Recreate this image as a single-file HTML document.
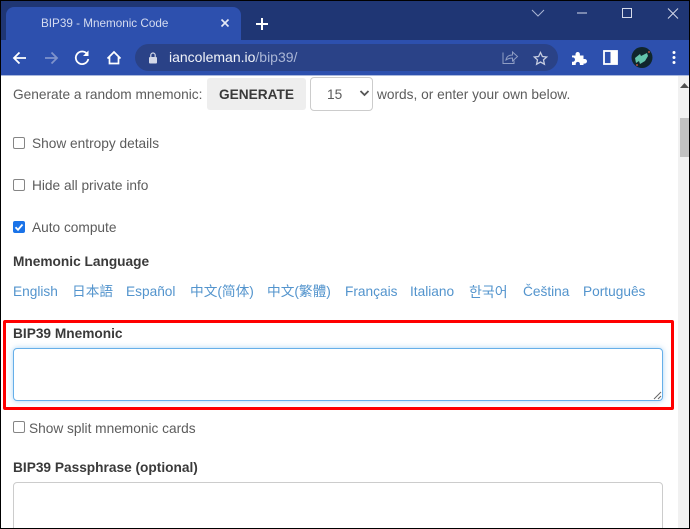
<!DOCTYPE html>
<html><head><meta charset="utf-8">
<style>
html,body{margin:0;padding:0;width:690px;height:529px;overflow:hidden;background:#fff}
body{position:relative;font-family:"Liberation Sans","Noto Sans CJK SC",sans-serif;font-size:13.7px;color:#5c5c5c}
.a{position:absolute;white-space:nowrap}
.t{line-height:22px}
b.a{color:#3a3a3a;font-weight:700;line-height:22px}
.cb{position:absolute;width:10px;height:10px;border:1px solid #858585;border-radius:2px;background:#fff}
.l{position:absolute;top:281px;line-height:22px;color:#5394cd;white-space:nowrap}
svg{position:absolute;overflow:visible}
</style></head><body>
<!-- chrome -->
<div class="a" style="left:0;top:0;width:690px;height:40px;background:#1f3674"></div>
<div class="a" style="left:0;top:40px;width:690px;height:36px;background:#2d50ae"></div>
<div class="a" style="left:0;top:75px;width:690px;height:1px;background:#a9b8dd"></div>
<div class="a" style="left:6px;top:7px;width:235px;height:33px;background:#2d50ae;border-radius:8px 8px 0 0"></div>
<div class="a" style="left:41px;top:13px;font-size:11.7px;line-height:22px;color:#d5dcf0">BIP39 - Mnemonic Code</div>
<div class="a" style="left:135px;top:44px;width:423px;height:27px;border-radius:14px;background:#2a4287"></div>
<svg style="left:0;top:0" width="690" height="76" fill="none">
<path d="M221.500 19.500l7 7m0-7l-7 7" stroke="#e6eaf6" stroke-width="1.600"/>
<path d="M262 18v12M256 24h12" stroke="#fff" stroke-width="2"/>
<path d="M532 10l6 6 6-6" stroke="#aab5d4" stroke-width="1"/>
<path d="M577 13h10" stroke="#d5daea" stroke-width="1"/>
<rect x="622.500" y="8.500" width="9" height="9" stroke="#d5daea" stroke-width="1"/>
<path d="M668 8.500l10 10m0-10l-10 10" stroke="#d5daea" stroke-width="1"/>
<path d="M26 58H14M19.500 52.500L14 58l5.500 5.500" stroke="#fff" stroke-width="1.800"/>
<path d="M57 58H45M51.500 52.500L57 58l-5.500 5.500" stroke="#7f93cb" stroke-width="1.800"/>
<path d="M87.500 54.500A6.300 6.300 0 1 0 88.300 59" stroke="#fff" stroke-width="1.800"/>
<path d="M88.500 50.500v5.500H83z" fill="#fff"/>
<path d="M107.500 58.500l6.500-6.500 6.500 6.500M109.500 57v6.500h9V57" stroke="#fff" stroke-width="1.700"/>
<rect x="149" y="57" width="8" height="6.500" rx="1" fill="#d3d8e8"/>
<path d="M150.800 57v-1.800a2.200 2.200 0 0 1 4.400 0V57" stroke="#d3d8e8" stroke-width="1.200"/>
<path d="M503 52.500v11h11v-3M506 60c.5-3.500 3-5 6.500-5v-3l5 4.500-5 4.500v-3c-2.500 0-4.500.5-6.500 2z" stroke="#8f9dc4" stroke-width="1"/>
<path d="M540.500 52.500l1.900 4 4.300.5-3.200 2.900.9 4.300-3.900-2.200-3.900 2.200.9-4.300-3.200-2.900 4.300-.5z" stroke="#c5cce0" stroke-width="1.300"/>
<path d="M572 55.500h3.500v-1.300a2.200 2.200 0 0 1 4.400 0v1.300h3.600V59h1.200a2.300 2.300 0 0 1 0 4.600h-1.200V65h-3.600v-1a2.100 2.100 0 0 0-4.200 0v1H572v-3.200h.8a2.200 2.200 0 0 0 0-4.400H572z" fill="#fff"/>
<rect x="604" y="51" width="13" height="13" stroke="#fff" stroke-width="1.800"/>
<rect x="610.500" y="51" width="6.500" height="13" fill="#fff"/>
<circle cx="642" cy="57.500" r="10.500" fill="#10262c"/>
<path d="M635 58l5-4 1 2 6-3 1 3-3 5-5 3-1-3-3 2z" fill="#63c5ab"/>
<circle cx="649" cy="52" r="1" fill="#b5523f"/><circle cx="637" cy="65" r="1" fill="#b5523f"/>
<circle cx="674" cy="52.500" r="1.500" fill="#fff"/><circle cx="674" cy="57.500" r="1.500" fill="#fff"/><circle cx="674" cy="62.500" r="1.500" fill="#fff"/>
</svg>
<div class="a" style="left:169px;top:47px;font-size:14px;line-height:20px;color:#aab6d6"><span style="color:#f1f3f9">iancoleman.io</span>/bip39/</div>

<!-- page -->
<div class="a t" style="left:13px;top:84px">Generate a random mnemonic:</div>
<div class="a" style="left:207px;top:78px;width:99px;height:32px;background:#eee;border-radius:3px;color:#3a3a3a;font-weight:700;text-align:center;line-height:34px">GENERATE</div>
<div class="a" style="left:310px;top:77px;width:61px;height:32px;border:1px solid #ccc;border-radius:4px;background:#fff"></div>
<div class="a t" style="left:327px;top:84px">15</div>
<svg style="left:360px;top:90px" width="10" height="7" fill="none"><path d="M.5 1l4 4 4-4" stroke="#555" stroke-width="1.800"/></svg>
<div class="a t" style="left:377px;top:84px">words, or enter your own below.</div>

<div class="cb" style="left:13px;top:137px"></div><div class="a t" style="left:32px;top:133px">Show entropy details</div>
<div class="cb" style="left:13px;top:179px"></div><div class="a t" style="left:32px;top:175px">Hide all private info</div>
<div class="a" style="left:13px;top:221px;width:12px;height:12px;background:#1a73e8;border-radius:2px"></div>
<svg style="left:13px;top:221px" width="12" height="12" fill="none"><path d="M2.500 6.300l2.500 2.500L9.500 3.500" stroke="#fff" stroke-width="1.800"/></svg>
<div class="a t" style="left:32px;top:217px">Auto compute</div>
<b class="a" style="left:13px;top:251px">Mnemonic Language</b>

<span class="l" style="left:13px">English</span>
<span class="l" style="left:72px">日本語</span>
<span class="l" style="left:126px">Español</span>
<span class="l" style="left:190px">中文(简体)</span>
<span class="l" style="left:267px">中文(繁體)</span>
<span class="l" style="left:345px">Français</span>
<span class="l" style="left:410px">Italiano</span>
<span class="l" style="left:469px;font-family:'Liberation Sans','Noto Sans CJK KR',sans-serif;font-size:14px">한국어</span>
<span class="l" style="left:523px">Čeština</span>
<span class="l" style="left:583px">Português</span>

<div class="a" style="left:3px;top:320px;width:665px;height:84px;border:3px solid #f00;border-radius:2px"></div>
<b class="a" style="left:13px;top:323px">BIP39 Mnemonic</b>
<div class="a" style="left:13px;top:348px;width:648px;height:51px;border:1px solid #66afe9;border-radius:4px;background:#fff;box-shadow:0 0 6px rgba(102,175,233,.55)"></div>
<svg style="left:653px;top:391px" width="9" height="9" fill="none"><path d="M1 8l7-7M5 8l3-3" stroke="#666" stroke-width="1"/></svg>

<div class="cb" style="left:13px;top:421px"></div><div class="a t" style="left:29px;top:418px">Show split mnemonic cards</div>
<b class="a" style="left:13px;top:457px">BIP39 Passphrase (optional)</b>
<div class="a" style="left:13px;top:482px;width:648px;height:60px;border:1px solid #ccc;border-radius:4px;background:#fff"></div>

<!-- scrollbar -->
<div class="a" style="left:678px;top:76px;width:12px;height:453px;background:#f1f1f1"></div>
<div class="a" style="left:680px;top:118px;width:9px;height:39px;background:#c1c1c1"></div>
<svg style="left:680px;top:83px" width="9" height="5"><path d="M0 5l4.500-5L9 5z" fill="#505050"/></svg>

<!-- frame -->
<div class="a" style="left:0;top:0;width:690px;height:1px;background:#000"></div>
<div class="a" style="left:0;top:528px;width:690px;height:1px;background:#000"></div>
<div class="a" style="left:0;top:0;width:1px;height:529px;background:#000"></div>
<div class="a" style="left:689px;top:0;width:1px;height:529px;background:#000"></div>
</body></html>
